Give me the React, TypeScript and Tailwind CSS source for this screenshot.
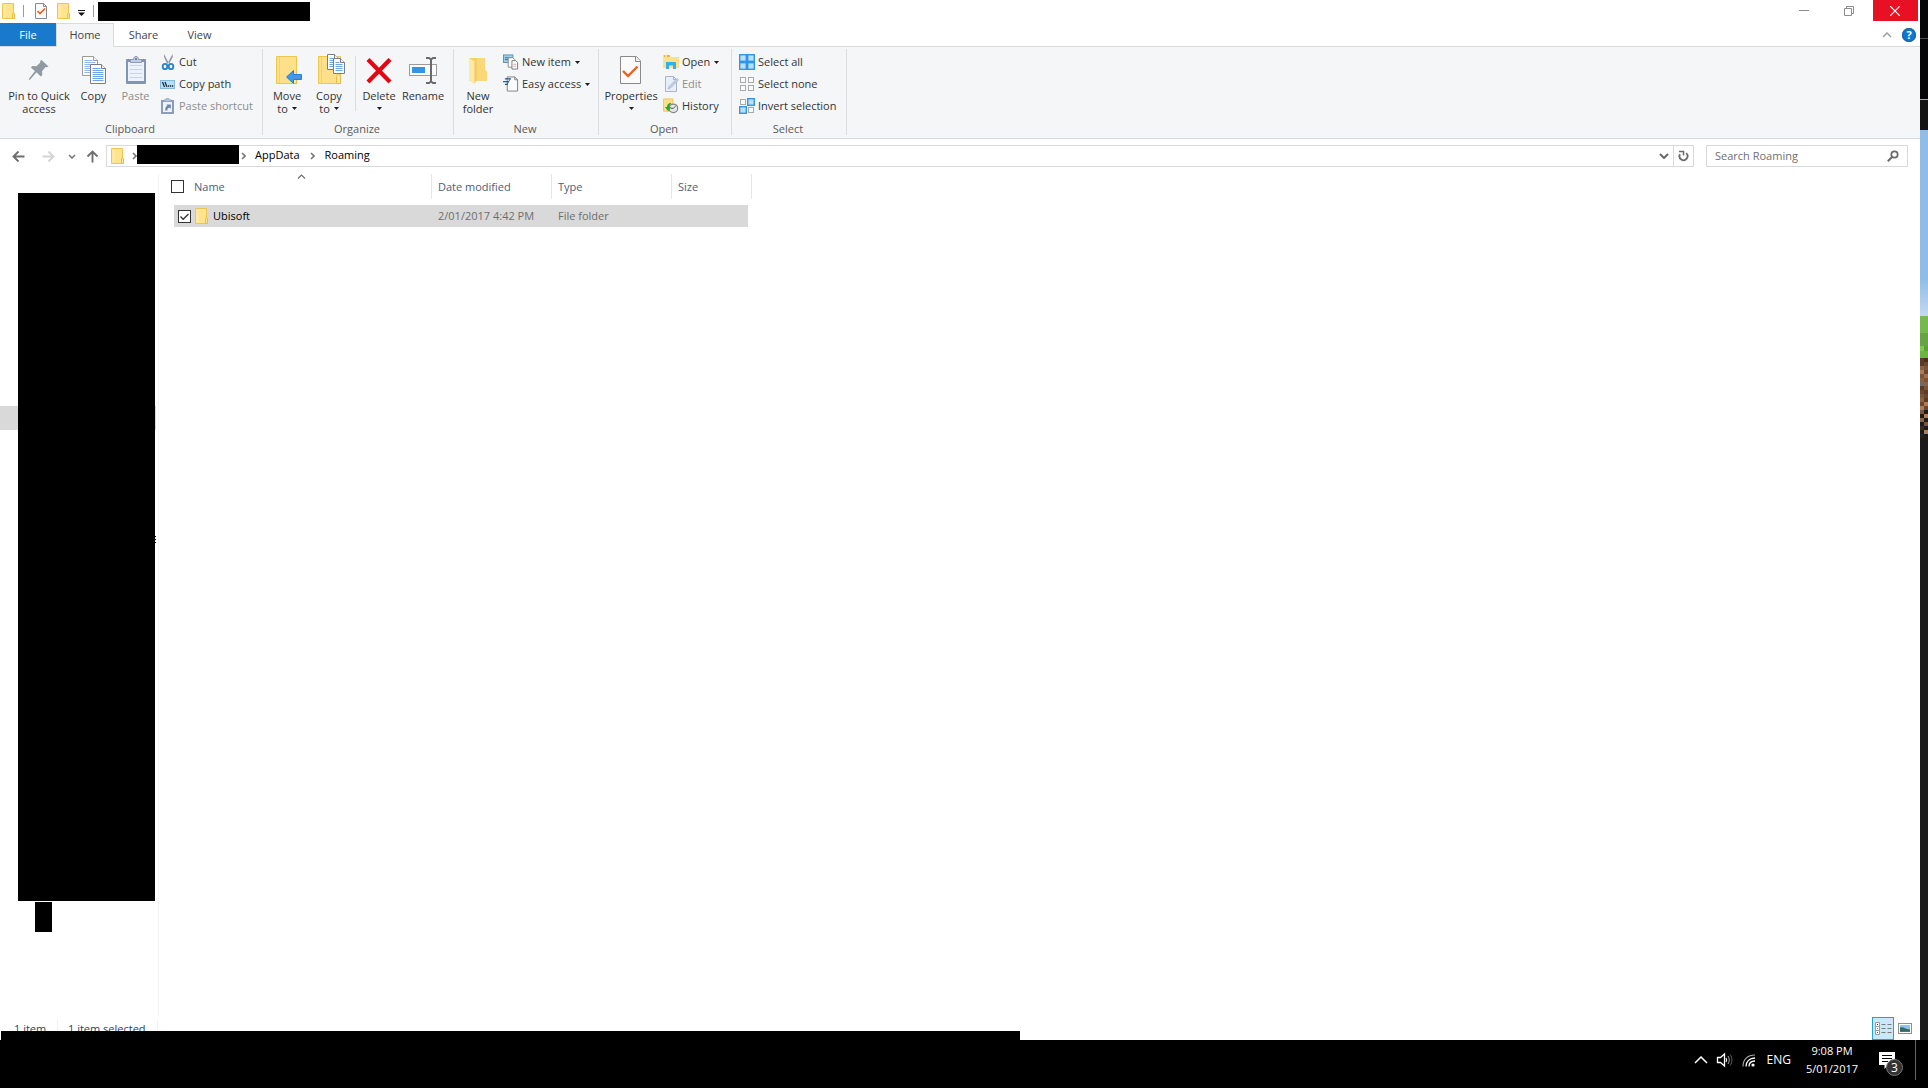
import type { ReactNode } from 'react';

/* ---------- icons ---------- */

function Folder({ className = '' }: { className?: string }) {
  return (
    <svg className={className} width="13" height="16" viewBox="0 0 13 16" aria-hidden="true">
      <path d="M.5.5h11v9.200l1 .8v5H.5z" fill="#ffe38f" stroke="#efc64c" />
      <path d="M1.500 1.500h2v13h-2z" fill="#ffeaa6" />
      <path d="M10.500 15.500v-4.500l1-1.500 1 1.500v4.500z" fill="#ffe9a0" stroke="#e9bd3d" />
    </svg>
  );
}

function DocCheck() {
  return (
    <svg width="12" height="16" viewBox="0 0 12 16" aria-hidden="true">
      <path d="M.5.5h8l3 3v12H.5z" fill="#fafafa" stroke="#8a8a8a" />
      <path d="M8.500.5v3h3" fill="none" stroke="#8a8a8a" />
      <path d="M2.500 8l2.500 2.500 5-5" fill="none" stroke="#f2601d" strokeWidth="1.600" />
    </svg>
  );
}

function Caret({ className = '' }: { className?: string }) {
  return (
    <svg className={className} width="5" height="3" viewBox="0 0 5 3" aria-hidden="true">
      <path d="M0 0h5L2.500 3z" fill="#1e1e1e" />
    </svg>
  );
}

function PinIcon() {
  return (
    <svg width="22" height="28" viewBox="0 0 22 28" aria-hidden="true">
      <path
        d="M13.500 4l7 6.500-2 .8-1-.3-3.500 4.200.3 3.800-1.500 1.500-4.300-4.200L2.200 23.500.8 24l.4-1.500L7 15 2.800 11.500 4.500 10l4 .2L12.300 6.500l-.2-1.500z"
        fill="#8f9aa2"
      />
    </svg>
  );
}

function Sheet({ x, y, w, h, dark = '#7d7d7d' }: { x: number; y: number; w: number; h: number; dark?: string }) {
  const rows = [];
  for (let r = 4; r < h - 2; r += 2) rows.push(r);
  return (
    <g transform={`translate(${x} ${y})`}>
      <path d={`M.5.5h${w - 5}l4 4v${h - 5}H.5z`} fill="#fff" stroke={dark} />
      {rows.map((r) => (
        <path key={r} d={`M2.500 ${r + 0.5}h${r < 5 ? w - 8 : w - 5}`} stroke="#6ea3ee" />
      ))}
      <path d={`M${w - 4.5}.5v4h4`} fill="#f5f5f5" stroke={dark} />
    </g>
  );
}

function CopyIcon() {
  return (
    <svg width="26" height="28" viewBox="0 0 26 28" aria-hidden="true">
      <g opacity="0.75">
        <Sheet x={1} y={0} w={16} h={20} />
      </g>
      <Sheet x={9} y={8} w={16} h={20} />
    </svg>
  );
}

function PasteIcon() {
  return (
    <svg width="22" height="28" viewBox="0 0 22 28" aria-hidden="true">
      <rect x="1" y="3" width="20" height="25" rx="1" fill="#8393b5" />
      <rect x="3" y="6" width="16" height="19" fill="#eef3fb" />
      <path d="M4.500 9.500h13M4.500 13.500h13M4.500 17.500h13M4.500 21.500h13" stroke="#c5d5ec" />
      <path d="M5.500 6.500v-3H8.500C8.500 1.500 9.500.5 11 .5s2.500 1 2.500 3h3v3z" fill="#c4cddd" stroke="#8b9ab8" />
      <rect x="10" y="2" width="2" height="2" fill="#76879f" />
    </svg>
  );
}

function CutIcon() {
  return (
    <svg width="16" height="16" viewBox="0 0 16 16" aria-hidden="true">
      <path d="M4 0l5 9.500-1.500 1L4 3zM12.500 0l-5 9.500 1.200 1L12.800 3z" fill="#8d99a3" />
      <ellipse cx="5" cy="12.500" rx="2.300" ry="2.600" fill="none" stroke="#2a86c8" strokeWidth="1.900" />
      <ellipse cx="11" cy="12.500" rx="2.300" ry="2.600" fill="none" stroke="#2a86c8" strokeWidth="1.900" />
    </svg>
  );
}

function CopyPathIcon() {
  return (
    <svg width="16" height="16" viewBox="0 0 16 16" aria-hidden="true">
      <rect x=".5" y="4.500" width="14" height="8" fill="#b5e0fa" stroke="#86b9da" />
      <path d="M2.500 6l2 5M5 6l2 5" stroke="#19202b" strokeWidth="1.200" />
      <path d="M8 10h1.200M10 10h1.200M12 10h1.200" stroke="#19202b" strokeWidth="1.400" />
    </svg>
  );
}

function PasteShortcutIcon() {
  return (
    <svg width="16" height="16" viewBox="0 0 16 16" aria-hidden="true">
      <path d="M1 2h13v14H1z" fill="#8c9cbd" />
      <path d="M3 4h9v10H3z" fill="#eef3fb" />
      <path d="M4 3.500h7V1.800H9V.5H6v1.300H4z" fill="#b6c2d8" stroke="#8c9cbd" strokeWidth=".6" />
      <path d="M5.200 12.500c0-3 .8-4.200 2.300-4.700L6.300 6.400h4.500v4.500L9.400 9.600C8 10 7.400 11 7.400 12.500z" fill="#7083ab" />
    </svg>
  );
}

function MoveToIcon() {
  return (
    <svg width="26" height="28" viewBox="0 0 26 28" aria-hidden="true">
      <path d="M.5.500h20v27H.5z" fill="#ffe08a" stroke="#efc64c" />
      <path d="M3.500 1v26" stroke="#f3d070" />
      <path d="M17.500 27.500V20l1.500-2 1.500 2v7.500z" fill="#ffe9a0" stroke="#e9bd3d" />
      <path d="M10.500 21l7-6.500v4h8v5h-8v4z" fill="#3f9be8" stroke="#2680cf" />
    </svg>
  );
}

function CopyToIcon() {
  return (
    <svg width="27" height="30" viewBox="0 0 27 30" className="shrink-0" aria-hidden="true">
      <path d="M.5 2.500h22v27H.5z" fill="#ffe08a" stroke="#efc64c" />
      <path d="M3.500 3v26" stroke="#f3d070" />
      <path d="M18.500 29.500V22l2-2 2 2v7.500z" fill="#ffe9a0" stroke="#e9bd3d" />
      <Sheet x={9} y={0} w={12} h={16} />
      <Sheet x={15} y={4} w={12} h={16} />
    </svg>
  );
}

function DeleteIcon() {
  return (
    <svg width="26" height="28" viewBox="0 0 26 28" aria-hidden="true">
      <path d="M2 3.500L24 26M24 3.500L2 26" stroke="#e30613" strokeWidth="4.200" />
    </svg>
  );
}

function RenameIcon() {
  return (
    <svg width="28" height="28" viewBox="0 0 28 28" aria-hidden="true">
      <rect x=".5" y="8.500" width="27" height="11" fill="#fcfcfc" stroke="#9b9b9b" />
      <rect x="3" y="11" width="13" height="6" fill="#2f96e8" />
      <path d="M17 2h3l2 1.500 2-1.500h3M22 3v23M17 27h3l2-1.500 2 1.500h3" fill="none" stroke="#6b6b6b" strokeWidth="2" />
    </svg>
  );
}

function NewFolderIcon() {
  return (
    <svg width="20" height="28" viewBox="0 0 20 28" aria-hidden="true">
      <path d="M1 2h16v12l2 2v9H1z" fill="#f6cf68" />
      <path d="M9 2h8v12l2 2v9H9z" fill="#fbd877" />
      <path d="M1 2l6 4v23l-6-5z" fill="#ffe9a6" />
      <path d="M7 6v21" stroke="#efc65a" />
    </svg>
  );
}

function NewItemIcon() {
  return (
    <svg width="17" height="16" viewBox="0 0 17 16" aria-hidden="true">
      <rect x=".5" y=".5" width="10" height="8" fill="#9bd0ee" stroke="#5b8fb0" />
      <path d="M2 3.500h7M2 5.500h4" stroke="#356f94" />
      <path d="M5.500 3.500h5l2 2v8h-7z" fill="#fff" stroke="#8a8a8a" />
      <path d="M9.500 6.500h4l2 2v7h-6z" fill="#fff" stroke="#777" />
      <path d="M11 10.500h3M11 12.500h3" stroke="#d9a3a3" />
    </svg>
  );
}

function EasyAccessIcon() {
  return (
    <svg width="17" height="16" viewBox="0 0 17 16" aria-hidden="true">
      <path d="M4.500.5h8l3 3v12h-11z" fill="#fbfbfb" stroke="#7d7d7d" />
      <path d="M12.500.5v3h3" fill="none" stroke="#7d7d7d" />
      <path d="M2 2.500h6M0 5.500h6M2 8.500h3" stroke="#1d5b94" strokeWidth="1.300" />
      <path d="M8 2l-4 7" stroke="#1d5b94" />
    </svg>
  );
}

function PropertiesIcon() {
  return (
    <svg width="22" height="28" viewBox="0 0 22 28" aria-hidden="true">
      <path d="M.5.5h16l4 4.500v22.500H.5z" fill="#fafafa" stroke="#8a8a8a" />
      <path d="M15.500.5V5.500h5" fill="#eee" stroke="#8a8a8a" />
      <path d="M3 15l5 5 9.500-9.500" fill="none" stroke="#f2601d" strokeWidth="2.400" />
    </svg>
  );
}

function OpenIcon() {
  return (
    <svg width="16" height="16" viewBox="0 0 16 16" aria-hidden="true">
      <path d="M0 1h7v2h9v11H0z" fill="#ffe08a" />
      <path d="M1 1h6v2H1z" fill="#f1b622" />
      <path d="M2 2h2" stroke="#fff" />
      <path d="M3 15V8h10v7h-3v-3.500H6V15z" fill="#35b1ea" />
    </svg>
  );
}

function EditIcon() {
  return (
    <svg width="16" height="16" viewBox="0 0 16 16" aria-hidden="true">
      <path d="M2.500.5h8l3 3v12h-11z" fill="#e8eef8" stroke="#a7b5cf" />
      <path d="M10.500.5v3h3" fill="none" stroke="#a7b5cf" />
      <path d="M5 13l1-2.500L14 2.500l1.500 1.500-8 8z" fill="#c3cee2" stroke="#a7b5cf" strokeWidth=".7" />
    </svg>
  );
}

function HistoryIcon() {
  return (
    <svg width="17" height="16" viewBox="0 0 17 16" aria-hidden="true">
      <path d="M.5.500h10v13H.5z" fill="#ffe08a" stroke="#efc64c" />
      <circle cx="11" cy="10.500" r="4.600" fill="#e6e6e6" stroke="#858585" strokeWidth="1.300" />
      <path d="M11 10.500l2.500-2.500M11 10.500H8.500" stroke="#4f4f4f" />
      <path d="M8.500 4.500C5.500 5 4.200 7 4.200 9H2l3.500 4.500L9 9H6.800c0-1.500.5-3 1.700-3.500z" fill="#2fa53a" />
    </svg>
  );
}

function SelectIcon({ on }: { on: boolean[] }) {
  const allOn = on.every(Boolean);
  const cells = [
    [0, 0],
    [8, 0],
    [0, 8],
    [8, 8],
  ];
  return (
    <svg width="16" height="16" viewBox="0 0 16 16" aria-hidden="true">
      {cells.map(([x, y], i) =>
        on[i] ? (
          <rect key={i} x={x + 0.7} y={y + 0.7} width="6.600" height="6.600" fill="#b9e0fb" stroke="#2f96e8" strokeWidth="1.400" />
        ) : (
          <rect key={i} x={x + 1.5} y={y + 1.5} width="5" height="5" fill="#fafafa" stroke="#a9a9a9" />
        ),
      )}
      {allOn && <path d="M8 0v16M0 8h16" stroke="#2f96e8" strokeWidth="1.600" />}
    </svg>
  );
}

function Chevron({ dir, size = 6, color = '#777', weight = 1.6 }: { dir: 'right' | 'down' | 'up'; size?: number; color?: string; weight?: number }) {
  const w = dir === 'right' ? size / 2 + 2 : size + 2;
  const h = dir === 'right' ? size + 2 : size / 2 + 2;
  const d =
    dir === 'right'
      ? `M1 1l${size / 2} ${size / 2}-${size / 2} ${size / 2}`
      : dir === 'down'
        ? `M1 1l${size / 2} ${size / 2} ${size / 2}-${size / 2}`
        : `M1 ${size / 2 + 1}l${size / 2}-${size / 2} ${size / 2} ${size / 2}`;
  return (
    <svg width={w} height={h} viewBox={`0 0 ${w} ${h}`} aria-hidden="true">
      <path d={d} fill="none" stroke={color} strokeWidth={weight} />
    </svg>
  );
}

function Arrow({ dir, color }: { dir: 'left' | 'right' | 'up'; color: string }) {
  const d = {
    left: 'M12.500 6.500H1.500M6.500 1.500l-5 5 5 5',
    right: 'M.5 6.500h11M6.500 1.500l5 5-5 5',
    up: 'M6.500 12.500V1.500M1.500 6.500l5-5 5 5',
  }[dir];
  return (
    <svg width="13" height="13" viewBox="0 0 13 13" aria-hidden="true">
      <path d={d} fill="none" stroke={color} strokeWidth="1.900" />
    </svg>
  );
}

/* ---------- ribbon pieces ---------- */

function Group({ label, width, children }: { label: string; width: string; children: ReactNode }) {
  return (
    <section aria-label={label} className={`flex shrink-0 ${width}`}>
      <div className="flex flex-1 flex-col">
        <div className="flex flex-1 items-start">{children}</div>
        <div className="pr-0.5 pb-[3px] text-center leading-[13px] text-[#5a5a5a]">{label}</div>
      </div>
      <div className="mt-0.5 mb-[3px] w-px bg-[#dcddde]" />
    </section>
  );
}

function Big({
  icon,
  lines,
  caret,
  className,
  disabled,
}: {
  icon: ReactNode;
  lines: string[];
  caret?: boolean;
  className: string;
  disabled?: boolean;
}) {
  return (
    <button
      disabled={disabled}
      className={`flex shrink-0 flex-col items-center pt-[9px] leading-[13px] whitespace-nowrap text-[#333] disabled:text-[#8d8d8d] ${className}`}
    >
      <span className="flex h-7 items-end justify-center">{icon}</span>
      <span className="mt-[5px]">{lines[0]}</span>
      <span className="flex h-[13px] items-center gap-1">
        {lines[1]}
        {caret && <Caret />}
      </span>
    </button>
  );
}

function Small({ icon, label, caret, disabled }: { icon: ReactNode; label: string; caret?: boolean; disabled?: boolean }) {
  return (
    <button disabled={disabled} className="flex h-[22px] items-center whitespace-nowrap text-[#333] disabled:text-[#8d8d8d]">
      <span className="mr-[3px] flex w-4 shrink-0">{icon}</span>
      {label}
      {caret && <Caret className="ml-1" />}
    </button>
  );
}

function Stack({ className, children }: { className: string; children: ReactNode }) {
  return <div className={`flex flex-col items-start pt-1 ${className}`}>{children}</div>;
}

/* ---------- desktop edge ---------- */

const DIRT = [
  ['#5b3a26', '#4a2c1d'],
  ['#5b3a26', '#6b4630'],
  ['#8c6242', '#79553a'],
  ['#b07c56', '#6b4630'],
  ['#79553a', '#a06f4b'],
  ['#8c6242', '#79553a'],
  ['#6c6c6c', '#8c6242'],
  ['#5b3a26', '#79553a'],
  ['#6b4630', '#5b3a26'],
  ['#79553a', '#6b4630'],
  ['#8c6242', '#5b3a26'],
  ['#6b4630', '#b07c56'],
  ['#b07c56', '#6b4630'],
  ['#79553a', '#1b1b1b'],
  ['#1b1b1b', '#b07c56'],
  ['#8c6242', '#1b1b1b'],
  ['#1b1b1b', '#79553a'],
  ['#3a2a20', '#1b1b1b'],
  ['#1b1b1b', '#b07c56'],
  ['#232323', '#1b1b1b'],
];

function DesktopEdge() {
  return (
    <div className="w-2 shrink-0 overflow-hidden bg-[#1b1b1b]" aria-hidden="true">
      <svg width="8" height="440" viewBox="0 0 8 440" shapeRendering="crispEdges">
        <defs>
          <linearGradient id="sky" x1="0" y1="0" x2="0" y2="1">
            <stop offset="0" stopColor="#8fbde7" />
            <stop offset=".8" stopColor="#8fbde7" />
            <stop offset="1" stopColor="#c2d9f2" />
          </linearGradient>
        </defs>
        <rect width="8" height="99" fill="#060507" />
        <rect y="38" width="8" height="1" fill="#4c4a4d" />
        <rect y="99" width="8" height="1" fill="#a9a9a9" />
        <rect y="100" width="8" height="30" fill="#131313" />
        <rect y="130" width="8" height="186" fill="url(#sky)" />
        <rect y="316" width="8" height="17" fill="#76b94f" />
        <rect y="333" width="8" height="13" fill="#68a344" />
        <rect y="346" width="4" height="5" fill="#7ccb4b" />
        <rect x="4" y="346" width="4" height="5" fill="#5f9e3c" />
        <rect y="351" width="8" height="7" fill="#68b83c" />
        {DIRT.map(([a, b], i) => (
          <g key={i}>
            <rect y={358 + i * 4} width="4" height="4" fill={a} />
            <rect x="4" y={358 + i * 4} width="4" height="4" fill={b} />
          </g>
        ))}
      </svg>
    </div>
  );
}

/* ---------- window regions ---------- */

function TitleBar() {
  return (
    <header className="flex h-[23px] shrink-0 items-start">
      <div className="flex h-[22px] items-center">
        <Folder className="ml-0.5" />
        <span className="ml-2 h-3 w-px bg-[#9a9a9a]" />
        <button aria-label="Properties" className="ml-[11px]">
          <DocCheck />
        </button>
        <button aria-label="New folder" className="ml-2.5">
          <Folder />
        </button>
        <button aria-label="Customize Quick Access Toolbar" className="ml-2 pt-1">
          <svg width="7" height="6" viewBox="0 0 7 6" aria-hidden="true">
            <path d="M0 .5h7" stroke="#111" />
            <path d="M0 2.500h7L3.500 6z" fill="#111" />
          </svg>
        </button>
        <span className="ml-2 h-3 w-px bg-[#9a9a9a]" />
        <span className="mt-px ml-1 h-[19px] w-[212px] bg-black" />
      </div>
      <div className="ml-auto flex h-[21px]">
        <button aria-label="Minimize" className="flex w-[45px] items-center justify-center">
          <span className="h-px w-2.5 bg-[#8c8c8c]" />
        </button>
        <button aria-label="Restore" className="mr-0.5 flex w-[45px] items-center justify-center">
          <svg width="10" height="10" viewBox="0 0 10 10" aria-hidden="true">
            <path d="M.5 2.500h7v7h-7zM2.500 2.500v-2h7v7h-2" fill="none" stroke="#8c8c8c" />
          </svg>
        </button>
        <button aria-label="Close" className="mr-0.5 flex w-[45px] items-center justify-center bg-[#e81123] pr-px">
          <svg width="10" height="10" viewBox="0 0 10 10" aria-hidden="true">
            <path d="M0 0l10 10M10 0L0 10" stroke="#fff" strokeWidth="1.200" />
          </svg>
        </button>
      </div>
    </header>
  );
}

function TabRow() {
  return (
    <nav className="flex h-6 shrink-0 border-b border-[#dadbdc] text-[#444]">
      <button className="h-[23px] w-14 bg-[#1979ca] text-white">File</button>
      <button className="-mb-px w-[58px] border border-b-0 border-[#dadbdc] bg-[#f5f6f7] pb-0.5">Home</button>
      <button className="w-[59px]">Share</button>
      <button className="w-[53px]">View</button>
      <div className="ml-auto flex items-center">
        <button aria-label="Minimize the Ribbon">
          <Chevron dir="up" size={8} color="#9a9a9a" weight={1.300} />
        </button>
        <button
          aria-label="Help"
          className="mr-1 ml-2.5 flex size-3.5 items-center justify-center rounded-full bg-[#0b78d4] text-[11px] font-bold text-white ring-1 ring-[#2a5f92] ring-inset"
        >
          ?
        </button>
      </div>
    </nav>
  );
}

function Ribbon() {
  return (
    <div className="flex h-[92px] shrink-0 border-b border-[#dadbdc] bg-[#f5f6f7]">
      <Group label="Clipboard" width="w-[263px]">
        <Big className="ml-1.5 w-[66px]" icon={<PinIcon />} lines={['Pin to Quick', 'access']} />
        <Big className="w-[43px]" icon={<CopyIcon />} lines={['Copy']} />
        <Big className="w-[41px]" icon={<PasteIcon />} lines={['Paste']} disabled />
        <Stack className="ml-1">
          <Small icon={<CutIcon />} label="Cut" />
          <Small icon={<CopyPathIcon />} label="Copy path" />
          <Small icon={<PasteShortcutIcon />} label="Paste shortcut" disabled />
        </Stack>
      </Group>
      <Group label="Organize" width="w-[191px]">
        <Big
          className="ml-[3px] w-[42px]"
          icon={
            <span className="pl-1">
              <MoveToIcon />
            </span>
          }
          lines={['Move', 'to']}
          caret
        />
        <Big
          className="w-[42px]"
          icon={
            <span className="pl-1">
              <CopyToIcon />
            </span>
          }
          lines={['Copy', 'to']}
          caret
        />
        <div className="mt-[9px] ml-[5px] h-[55px] w-px bg-[#dcddde]" />
        <Big className="w-[46px]" icon={<DeleteIcon />} lines={['Delete', '']} caret />
        <Big className="w-[42px]" icon={<RenameIcon />} lines={['Rename']} />
      </Group>
      <Group label="New" width="w-[145px]">
        <Big className="ml-[3px] w-[42px]" icon={<NewFolderIcon />} lines={['New', 'folder']} />
        <Stack className="ml-1">
          <Small icon={<NewItemIcon />} label="New item" caret />
          <Small icon={<EasyAccessIcon />} label="Easy access" caret />
        </Stack>
      </Group>
      <Group label="Open" width="w-[133px]">
        <Big className="ml-[5px] w-[54px]" icon={<PropertiesIcon />} lines={['Properties', '']} caret />
        <Stack className="ml-[5px]">
          <Small icon={<OpenIcon />} label="Open" caret />
          <Small icon={<EditIcon />} label="Edit" disabled />
          <Small icon={<HistoryIcon />} label="History" />
        </Stack>
      </Group>
      <Group label="Select" width="w-[115px]">
        <Stack className="ml-[7px]">
          <Small icon={<SelectIcon on={[true, true, true, true]} />} label="Select all" />
          <Small icon={<SelectIcon on={[false, false, false, false]} />} label="Select none" />
          <Small icon={<SelectIcon on={[false, true, true, false]} />} label="Invert selection" />
        </Stack>
      </Group>
    </div>
  );
}

function AddressRow() {
  return (
    <div className="flex h-[35px] shrink-0 items-start pt-1.5 pr-3">
      <div className="flex h-[22px] w-[106px] shrink-0 items-center pl-3">
        <button aria-label="Back">
          <Arrow dir="left" color="#6f6f6f" />
        </button>
        <button aria-label="Forward" className="ml-[17px]" disabled>
          <Arrow dir="right" color="#d5d5d5" />
        </button>
        <button aria-label="Recent locations" className="ml-[13px]">
          <Chevron dir="down" />
        </button>
        <button aria-label="Up" className="ml-2.5">
          <Arrow dir="up" color="#6f6f6f" />
        </button>
      </div>
      <div className="flex h-[22px] flex-1 items-center border border-[#d9d9d9] text-black">
        <Folder className="ml-1" />
        <span className="ml-2 flex">
          <Chevron dir="right" />
        </span>
        <span className="-mt-px h-[19px] w-[102px] shrink-0 self-start bg-black" />
        <span className="ml-0.5 flex">
          <Chevron dir="right" />
        </span>
        <button className="ml-[9px] pb-0.5">AppData</button>
        <span className="ml-2.5 flex">
          <Chevron dir="right" />
        </span>
        <button className="ml-2.5 pb-0.5">Roaming</button>
        <button aria-label="Previous locations" className="mr-1 ml-auto">
          <Chevron dir="down" size={8} color="#6a6a6a" weight={2} />
        </button>
        <button aria-label="Refresh" className="flex h-full w-5 items-center justify-center border-l border-[#d9d9d9]">
          <svg width="11" height="12" viewBox="0 0 11 12" aria-hidden="true">
            <path d="M8.200 3.200A4 4 0 1 1 2 4.200" fill="none" stroke="#6a6a6a" strokeWidth="1.800" />
            <path d="M1 1.500h4.500v4" fill="none" stroke="#6a6a6a" strokeWidth="1.500" />
          </svg>
        </button>
      </div>
      <label className="ml-3 flex h-[22px] w-[202px] shrink-0 items-center border border-[#d9d9d9] pr-2 pl-2">
        <input
          aria-label="Search Roaming"
          placeholder="Search Roaming"
          className="min-w-0 flex-1 bg-transparent outline-none placeholder:text-[#6f6f6f]"
        />
        <svg width="12" height="12" viewBox="0 0 12 12" aria-hidden="true">
          <circle cx="7.500" cy="4.500" r="3.200" fill="none" stroke="#6a6a6a" strokeWidth="1.700" />
          <path d="M5 7L.8 11.200" stroke="#6a6a6a" strokeWidth="2" />
        </svg>
      </label>
    </div>
  );
}

function NavPane() {
  return (
    <aside className="relative w-[158px] shrink-0">
      <div className="absolute top-[232px] left-0 h-6 w-[156px] bg-[#d9d9d9]" />
      <div className="absolute top-[362px] left-[155px] flex flex-col gap-0.5">
        <span className="h-px w-px bg-black" />
        <span className="h-px w-px bg-black" />
        <span className="h-px w-px bg-black" />
      </div>
      <div className="relative mt-[19px] ml-[18px] h-[708px] w-[137px] bg-black" />
      <div className="mt-px ml-[35px] h-[30px] w-[17px] bg-black" />
    </aside>
  );
}

const BOX = 'size-[13px] shrink-0 appearance-none border border-[#333] bg-white';

function FileList() {
  const th = 'h-[25px] border-r border-[#e5e5e5] p-0 pl-1.5 text-left font-normal text-[#4c607a]';
  const cell = 'mt-1.5 flex h-[22px] items-center bg-[#d9d9d9] pl-1.5 whitespace-nowrap text-[#6d6d6d]';
  return (
    <main className="min-w-0 flex-1 border-l border-[#f3f3f3]">
      <table className="ml-3 w-[581px] table-fixed border-separate border-spacing-0">
        <colgroup>
          <col className="w-[261px]" />
          <col className="w-[120px]" />
          <col className="w-[120px]" />
          <col className="w-20" />
        </colgroup>
        <thead>
          <tr>
            <th className="relative h-[25px] border-r border-[#e5e5e5] p-0 text-left font-normal text-[#4c607a]">
              <span className="flex items-center">
                <input type="checkbox" aria-label="Select all items" className={BOX} />
                <button className="ml-2.5">Name</button>
              </span>
              <span className="absolute top-0 left-[126px]">
                <Chevron dir="up" size={7} color="#6a6a6a" weight={1.100} />
              </span>
            </th>
            <th className={th}>
              <button>Date modified</button>
            </th>
            <th className={th}>
              <button>Type</button>
            </th>
            <th className={th}>
              <button>Size</button>
            </th>
          </tr>
        </thead>
        <tbody>
          <tr>
            <td className="p-0">
              <div className="mt-1.5 ml-[3px] flex h-[22px] items-center bg-[#d9d9d9] pl-1 text-black">
                <span className="relative flex">
                  <input type="checkbox" defaultChecked aria-label="Select Ubisoft" className={BOX} />
                  <svg className="pointer-events-none absolute top-0 left-0" width="13" height="13" viewBox="0 0 13 13" aria-hidden="true">
                    <path d="M2.500 6.500l2.700 2.800L10.500 4" fill="none" stroke="#333" strokeWidth="1.300" />
                  </svg>
                </span>
                <Folder className="ml-1" />
                <span className="ml-[5px]">Ubisoft</span>
              </div>
            </td>
            <td className="p-0">
              <div className={cell}>2/01/2017 4:42 PM</div>
            </td>
            <td className="p-0">
              <div className={cell}>File folder</div>
            </td>
            <td className="p-0">
              <div className="mt-1.5 mr-1 h-[22px] bg-[#d9d9d9]" />
            </td>
          </tr>
        </tbody>
      </table>
    </main>
  );
}

function StatusBar() {
  return (
    <footer className="relative flex h-6 shrink-0 items-center whitespace-nowrap text-[#2b3f63]">
      <span className="ml-3.5 w-[33px] pt-0.5">1 item</span>
      <span className="ml-2.5 h-4 w-px bg-[#f0f0f0]" />
      <span className="ml-2.5 w-[79px] pt-0.5">1 item selected</span>
      <span className="ml-2.5 h-4 w-px bg-[#f0f0f0]" />
      <button
        aria-label="Details view"
        className="ml-auto flex h-[23px] w-[22px] items-center justify-center self-end border border-[#26a0da] bg-[#cbe8f6]"
      >
        <svg width="17" height="14" viewBox="0 0 17 14" aria-hidden="true">
          <path d="M.5.500h4v4h-4zM.5 4.500h4v4h-4zM.5 8.500h4v4h-4z" fill="#fff" stroke="#9a9a9a" />
          <path d="M6.500 2.500h4M12.500 2.500h4M6.500 6.500h4M12.500 6.500h4M6.500 10.500h4M12.500 10.500h4" stroke="#7b7b7b" />
          <path d="M2 2.500h1" stroke="#333" />
          <path d="M2 6.500h1" stroke="#2f80e8" />
          <path d="M2 10.500h1" stroke="#d22" />
        </svg>
      </button>
      <button aria-label="Large icons view" className="mr-2 ml-1">
        <svg width="14" height="11" viewBox="0 0 14 11" aria-hidden="true">
          <rect x=".5" y=".5" width="13" height="10" fill="#fff" stroke="#8f8f8f" />
          <rect x="2" y="2" width="10" height="7" fill="#8fc3ee" />
          <path d="M2 4.500c3-1 5 1.500 10 2V8H2z" fill="#356b5c" />
          <path d="M2 8h10v1H2z" fill="#3a6fb5" />
        </svg>
      </button>
      <div className="absolute bottom-0 left-px h-[9px] w-[1019px] bg-black" />
    </footer>
  );
}

function Taskbar() {
  return (
    <div className="flex h-12 shrink-0 items-start justify-end bg-black text-white">
      <div className="flex h-10 items-center">
        <button aria-label="Show hidden icons">
          <Chevron dir="up" size={12} color="#fff" weight={1.500} />
        </button>
        <button aria-label="Volume" className="ml-2">
          <svg width="18" height="16" viewBox="0 0 18 16" aria-hidden="true">
            <path d="M1.500 5.500h3l4-3.500v12l-4-3.500h-3z" fill="none" stroke="#fff" strokeWidth="1.300" />
            <path d="M10 6c.8 1.200.8 2.800 0 4" fill="none" stroke="#fff" strokeWidth="1.200" />
            <path d="M12 4c1.700 2.400 1.700 5.600 0 8" fill="none" stroke="#aaa" />
            <path d="M14.200 2.500c2.300 3.300 2.300 7.700 0 11" fill="none" stroke="#666" />
          </svg>
        </button>
        <button aria-label="Network" className="ml-2">
          <svg width="14" height="14" viewBox="0 0 14 14" aria-hidden="true">
            <path d="M1 13.500C1 6.500 5.500 2 13 2" fill="none" stroke="#aaa" strokeWidth="1.100" />
            <path d="M4 13.500c0-5 3.500-8.500 9-8.500M7 13.500c0-3.500 2.500-5.500 6-5.500" fill="none" stroke="#fff" strokeWidth="1.300" />
            <circle cx="11" cy="12" r="1.600" fill="#fff" />
          </svg>
        </button>
        <button className="ml-[11px] text-xs">ENG</button>
        <button className="ml-3.5 flex w-[54px] flex-col items-center leading-[18px]">
          <span>9:08 PM</span>
          <span className="whitespace-nowrap">5/01/2017</span>
        </button>
        <button aria-label="3 new notifications" className="relative ml-5 size-6">
          <svg width="16" height="17" viewBox="0 0 16 17" className="absolute top-1 left-0" aria-hidden="true">
            <path d="M0 0h16v13H9l-3.500 4v-4H0z" fill="#fff" />
            <path d="M3 3.500h10M3 6.500h10M3 9.500h6" stroke="#000" />
          </svg>
          <span className="absolute top-[11px] left-[7px] flex size-[17px] items-center justify-center rounded-full border border-[#777] bg-[#333] text-xs">
            3
          </span>
        </button>
      </div>
      <div className="mr-3 ml-3 h-10 w-px bg-[#666]" />
    </div>
  );
}

export default function App() {
  return (
    <div className="flex min-h-screen flex-col bg-black font-['Open_Sans','Noto_Sans',sans-serif] text-[11px] leading-4">
      <div className="flex flex-1">
        <div className="flex min-w-0 flex-1 flex-col bg-white">
          <TitleBar />
          <TabRow />
          <Ribbon />
          <AddressRow />
          <div className="flex flex-1">
            <NavPane />
            <FileList />
          </div>
          <StatusBar />
        </div>
        <DesktopEdge />
      </div>
      <Taskbar />
    </div>
  );
}
